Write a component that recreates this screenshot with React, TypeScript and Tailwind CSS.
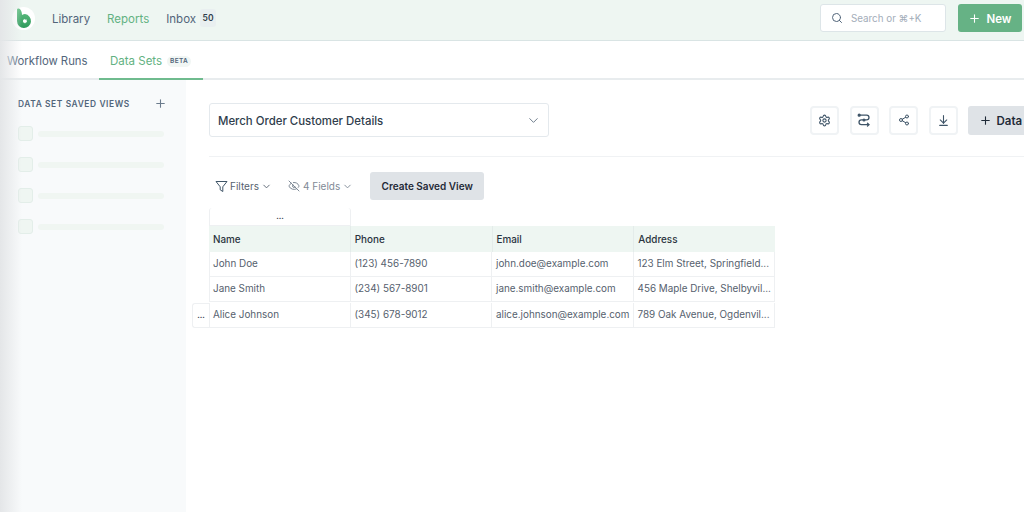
import { ArrowDownToLine, ChevronDown, EyeOff, Plus, Search, Settings, Share2 } from "lucide-react"

const rows = [
  { name: "John Doe", phone: "(123) 456-7890", email: "john.doe@example.com", address: "123 Elm Street, Springfield..." },
  { name: "Jane Smith", phone: "(234) 567-8901", email: "jane.smith@example.com", address: "456 Maple Drive, Shelbyvil..." },
  { name: "Alice Johnson", phone: "(345) 678-9012", email: "alice.johnson@example.com", address: "789 Oak Avenue, Ogdenvil..." },
]

const headers = ["Name", "Phone", "Email", "Address"]

const SwapIcon = () => (
  <svg width="14" height="14" viewBox="0 0 16 16" fill="none" stroke="#3f5568" strokeWidth="1.500" strokeLinecap="round" strokeLinejoin="round">
    <path d="M2.500 2.500h8.500a2.700 2.700 0 0 1 0 5.400H5a2.700 2.700 0 0 0 0 5.400h8.500" />
    <circle cx="2.500" cy="2.500" r="1.100" fill="#3f5568" />
    <circle cx="8" cy="7.900" r="1" fill="#3f5568" />
    <path d="M12 11.700l1.700 1.600-1.700 1.600" />
  </svg>
)

const FilterIcon = () => (
  <svg width="13" height="13" viewBox="0 0 13 13" fill="none" stroke="#3f5568" strokeWidth="1" strokeLinejoin="round">
    <path d="M1 1.500h11L7.800 6.800v4.700L5.200 9.800v-3z" />
  </svg>
)

const Logo = () => (
  <div className="w-[23px] h-[23px] rounded-full bg-white flex items-center justify-center">
    <svg width="16" height="21" viewBox="0 0 16 21">
      <defs>
        <linearGradient id="logoGreen" x1="0" y1="0" x2="0" y2="1">
          <stop offset="0" stopColor="#63c184" />
          <stop offset="1" stopColor="#2f9a5c" />
        </linearGradient>
      </defs>
      <path d="M1 1.500C1 .5 2.500 0 3.500 .8 5 2 6 4 6 7c1-.6 2-.9 3-.9a7 7 0 1 1-8 7z" fill="url(#logoGreen)" />
      <path d="M8.500 10.800l1 .9 1.300-.1-.2 1.500.5 1-1.300.4-.8 1-1-.9-1.200-.3.400-1.300-.3-1.200 1.300-.1z" fill="#fff" />
    </svg>
  </div>
)

const IconButton = ({ children }: { children: React.ReactNode }) => (
  <button className="w-[29px] h-[29px] flex items-center justify-center bg-white border-2 border-[#f0f3f5] rounded-[4px]">
    {children}
  </button>
)

export default function App() {
  return (
    <div className="relative w-[1024px] h-[512px] overflow-hidden bg-white text-[#44546a] font-['Inter',sans-serif]">
      {/* top bar */}
      <div className="h-[41px] flex items-center bg-[#eef6f2] border-b border-[#d9e4e4] pl-[12px] pr-[2px] pb-[4px]">
        <Logo />
        <nav className="flex items-center ml-[17px] text-[11.500px]">
          <span className="pt-[3px] text-[#52657a]">Library</span>
          <span className="ml-[17px] pt-[3px] text-[#62b282]">Reports</span>
          <span className="ml-[17px] pt-[3px] text-[#52657a]">Inbox</span>
          <span className="ml-[4px] w-[16px] h-[18px] flex items-center justify-center rounded-[3px] bg-[#e9eff0] text-[#2f3d4c] text-[8.500px] font-semibold">50</span>
        </nav>
        <div className="ml-auto flex items-center gap-[12px]">
          <div className="w-[126px] h-[28px] flex items-center pl-[10px] bg-white border border-[#dde5e8] rounded-[3px]">
            <Search size={12} color="#52657a" />
            <span className="ml-[8px] pt-[3px] text-[9.800px] text-[#a3adb9]">Search or ⌘+K</span>
          </div>
          <button className="w-[64px] h-[28px] flex items-center justify-center gap-[5px] bg-[#66b285] rounded-[3px] text-white text-[11.500px] font-semibold">
            <Plus size={13} />
            <span className="pt-[3px]">New</span>
          </button>
        </div>
      </div>

      {/* tabs */}
      <div className="h-[39px] flex items-stretch bg-white border-b-2 border-[#e8ecee]">
        <div className="w-[99px] pl-[7px] pt-[4px] flex items-center text-[11.300px] text-[#52657a]">Workflow Runs</div>
        <div className="w-[104px] -mb-[2px] pl-[11px] pt-[4px] flex items-center border-b-2 border-[#6fbb8e] text-[11.500px] text-[#62b282]">
          Data Sets
          <span className="ml-[5px] px-[3px] py-[1px] rounded-full bg-[#f1f6f4] text-[#52657a] text-[6.500px] font-semibold tracking-[0.3px]">BETA</span>
        </div>
      </div>

      <div className="flex h-[432px]">
        {/* sidebar */}
        <aside className="w-[186px] shrink-0 bg-[#f8fafb] pl-[18px] pt-[17px]">
          <div className="flex items-center justify-between pr-[19px]">
            <span className="text-[8.400px] font-semibold tracking-[0.6px] text-[#52657a]">DATA SET SAVED VIEWS</span>
            <Plus size={13} color="#6b7b8c" className="mb-[2px]" />
          </div>
          <div className="mt-[14px] pr-[22px] flex flex-col gap-[16px]">
            {[0, 1, 2, 3].map(i => (
              <div key={i} className="flex items-center gap-[5px]">
                <div className="w-[15px] h-[15px] rounded-[3px] bg-[#eff6f2] border border-[#e3eee9]" />
                <div className="flex-1 h-[6px] rounded-full bg-[#f0f6f2]" />
              </div>
            ))}
          </div>
        </aside>

        {/* content */}
        <main className="w-[900px] shrink-0 pl-[23px] pt-[23px]">
          <div className="flex items-center h-[34px]">
            <button className="w-[340px] h-[34px] flex items-center justify-between pl-[8px] pr-[7px] border border-[#e4e9ed] rounded-[3px] bg-white">
              <span className="pt-[3px] text-[11.400px] font-medium text-[#2f3d4c]">Merch Order Customer Details</span>
              <ChevronDown size={15} color="#5c6c7d" strokeWidth={1.4} />
            </button>
            <div className="ml-[261px] flex items-center gap-[10.500px]">
              <IconButton><Settings size={13} color="#3f5568" /></IconButton>
              <IconButton><SwapIcon /></IconButton>
              <IconButton><Share2 size={12} color="#3f5568" /></IconButton>
              <IconButton><ArrowDownToLine size={13} color="#3f5568" /></IconButton>
            </div>
            <button className="ml-[10px] w-[100px] shrink-0 h-[29px] flex items-center gap-[5px] pl-[11px] bg-[#dfe3e7] rounded-[3px] text-[11.500px] font-semibold text-[#1f2a37]">
              <Plus size={13} />
              <span className="pt-[3px]">Data</span>
            </button>
          </div>

          <div className="mt-[19px] border-t border-[#f0f2f4]" />

          <div className="mt-[15px] flex items-center h-[28px]">
            <div className="ml-[6px] flex items-center text-[10px] text-[#56616e]">
              <FilterIcon />
              <span className="ml-[2px]">Filters</span>
              <ChevronDown size={11} className="ml-[2px]" />
            </div>
            <div className="ml-[16px] flex items-center text-[10px] text-[#7f8a96]">
              <EyeOff size={12} />
              <span className="ml-[3px]">4 Fields</span>
              <ChevronDown size={11} className="ml-[2px]" />
            </div>
            <button className="ml-[17px] w-[114px] h-[28px] bg-[#dfe3e7] rounded-[3px] text-[10px] font-semibold text-[#1f2a37]">
              Create Saved View
            </button>
          </div>

          {/* table */}
          <div className="mt-[8px] -ml-[17px] w-[583px] text-[9.900px]">
            <div className="flex h-[18px] pl-[17px]">
              <div className="w-[142px] pb-[2px] flex items-center justify-center border-x border-b border-[#eef0f2] rounded-t-[3px] text-[8px] text-[#3f4b59] font-semibold">...</div>
            </div>
            <div className="flex h-[26px] pl-[17px]">
              <div className="flex flex-1 bg-[#eef6f2] text-[#2a3440] font-medium">
                {headers.map(h => (
                  <div key={h} className="flex-1 flex items-center pl-[4px] border-r border-[#e4ecea] last:border-r-0">{h}</div>
                ))}
              </div>
            </div>
            {rows.map((row, i) => (
              <div key={row.name} className={`flex h-[25px] ${i === 2 ? "mt-[1px]" : ""}`}>
                <div className={`w-[17px] shrink-0 pb-[2px] flex items-center justify-center text-[8px] text-[#3f4b59] font-semibold ${i === 2 ? "border border-r-0 border-[#eef0f2] rounded-l-[3px]" : ""}`}>
                  {i === 2 ? "..." : ""}
                </div>
                <div className="flex flex-1 min-w-0 border-b border-[#eef0f2] text-[#56616e] whitespace-nowrap">
                  <div className="flex-1 pb-[2px] flex items-center pl-[3px] border-l border-r border-[#eef0f2]">{row.name}</div>
                  <div className="flex-1 pb-[2px] flex items-center pl-[4px] border-r border-[#eef0f2]">{row.phone}</div>
                  <div className="flex-1 pb-[2px] flex items-center pl-[4px] border-r border-[#eef0f2]">{row.email}</div>
                  <div className="flex-1 pb-[2px] flex items-center pl-[4px] border-r border-[#eef0f2]">{row.address}</div>
                </div>
              </div>
            ))}
          </div>
        </main>
      </div>

      {/* soft shadow on the left edge */}
      <div className="absolute left-0 top-0 bottom-0 w-[22px] bg-gradient-to-r from-[#e4e6e8] to-transparent pointer-events-none" />
    </div>
  )
}
